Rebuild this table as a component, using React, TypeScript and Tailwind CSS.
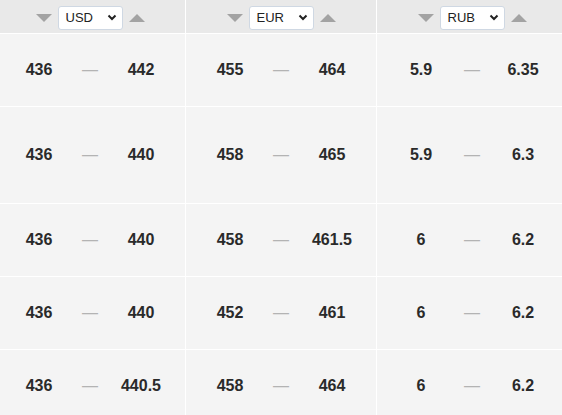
import React from "react";

const currencies = ["USD", "EUR", "RUB"];

// each row: [min, max] per currency
const rows: { h: string; cells: [string, string][] }[] = [
  { h: "h-[72px]", cells: [["436", "442"], ["455", "464"], ["5.9", "6.35"]] },
  { h: "h-[96px]", cells: [["436", "440"], ["458", "465"], ["5.9", "6.3"]] },
  { h: "h-[72px]", cells: [["436", "440"], ["458", "461.5"], ["6", "6.2"]] },
  { h: "h-[72px]", cells: [["436", "440"], ["452", "461"], ["6", "6.2"]] },
  { h: "h-[72px]", cells: [["436", "440.5"], ["458", "464"], ["6", "6.2"]] },
];

const TriangleDown = () => (
  <svg width="16" height="8" viewBox="0 0 16 8" className="shrink-0">
    <path d="M0 0 L16 0 L8 8 Z" fill="#a3a3a3" />
  </svg>
);

const TriangleUp = () => (
  <svg width="16" height="8" viewBox="0 0 16 8" className="shrink-0">
    <path d="M0 8 L16 8 L8 0 Z" fill="#a3a3a3" />
  </svg>
);

const CurrencySelect: React.FC<{ value: string }> = ({ value }) => (
  <div className="flex items-center justify-between w-[65px] h-[24px] pl-[7px] pr-[5px] bg-white border border-[#cfd8e3] rounded-[3px] text-[13px] text-[#222] leading-none">
    <span>{value}</span>
    <svg width="10" height="7" viewBox="0 0 10 7">
      <path d="M1.5 1.5 L5 5 L8.5 1.5" stroke="#222" strokeWidth="2" fill="none" />
    </svg>
  </div>
);

export default function App() {
  return (
    <div className="w-[562px] h-[415px] overflow-hidden bg-white font-['Liberation_Sans',Arial,sans-serif]">
      <div className="-ml-[5px] w-[573px]">
        {/* header */}
        <div className="flex gap-px h-[33px] mb-px">
          {currencies.map((c) => (
            <div key={c} className="w-[190px] bg-[#e9e9e9] flex items-center justify-center gap-[6px] pt-[2px]">
              <TriangleDown />
              <CurrencySelect value={c} />
              <TriangleUp />
            </div>
          ))}
        </div>
        {/* body */}
        {rows.map((r, i) => (
          <div key={i} className={`flex gap-px mb-px ${r.h}`}>
            {r.cells.map(([lo, hi], j) => (
              <div key={j} className="w-[190px] bg-[#f4f4f4] flex items-center justify-center">
                <span className="w-[51px] text-center text-[16px] font-bold text-[#2a2a2a]">{lo}</span>
                <span className="w-[51px] text-center text-[16px] text-[#b3b3b3]">—</span>
                <span className="w-[51px] text-center text-[16px] font-bold text-[#2a2a2a]">{hi}</span>
              </div>
            ))}
          </div>
        ))}
      </div>
    </div>
  );
}
